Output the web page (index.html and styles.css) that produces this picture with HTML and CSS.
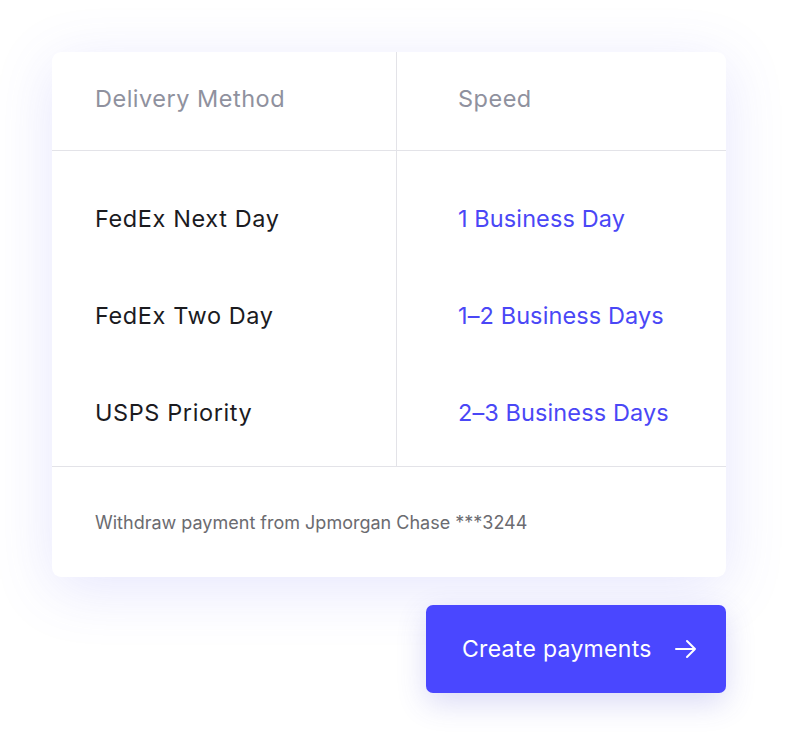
FILE: index.html
```html
<!DOCTYPE html>
<html>
<head>
<meta charset="utf-8">
<link rel="stylesheet" href="styles.css">
</head>
<body>
<div class="wrap">
  <div class="card">
    <div class="grid head">
      <div class="cell left">Delivery Method</div>
      <div class="cell right">Speed</div>
    </div>
    <div class="grid body">
      <div class="col left">
        <div class="row">FedEx Next Day</div>
        <div class="row">FedEx Two Day</div>
        <div class="row">USPS Priority</div>
      </div>
      <div class="col right blue">
        <div class="row">1 Business Day</div>
        <div class="row">1–2 Business Days</div>
        <div class="row">2–3 Business Days</div>
      </div>
    </div>
    <div class="foot">Withdraw payment from Jpmorgan Chase ***3244</div>
  </div>
  <div class="actions">
    <button class="btn">
      <span>Create payments</span>
      <svg width="24" height="24" viewBox="0 0 24 24" fill="none" stroke="#fff" stroke-width="2" stroke-linecap="round" stroke-linejoin="round"><path d="M2 12h19M13 4l8 8-8 8"/></svg>
    </button>
  </div>
</div>
</body>
</html>
```
FILE: styles.css
```css
* { box-sizing: border-box; }
html, body { margin: 0; background: #fff; }
body { font-family: Inter, "Liberation Sans", sans-serif; }
.wrap { padding: 52px 0 40px 52px; width: 726px; }
.card {
  width: 674px;
  background: #fff;
  border-radius: 9px;
  box-shadow: 0 12px 60px rgba(90, 90, 240, 0.15);
  overflow: hidden;
}
.grid { display: grid; grid-template-columns: 344px 330px; }
.head { height: 99px; border-bottom: 1px solid #e3e3e8; }
.cell { display: flex; align-items: center; padding-left: 43px; padding-bottom: 5px; font-size: 23.5px; color: #8f919e; letter-spacing: 0.5px; }
.cell.right { padding-left: 61px; border-left: 1px solid #e3e3e8; }
.body { height: 316px; border-bottom: 1px solid #e3e3e8; }
.col { display: flex; flex-direction: column; padding-top: 19px; }
.col.left { padding-left: 43px; }
.col.right { padding-left: 61px; border-left: 1px solid #e3e3e8; }
.row { height: 97px; flex: none; display: flex; align-items: center; font-size: 23.5px; color: #1b1b1f; letter-spacing: 0.6px; }
.blue .row { color: #4a47f6; letter-spacing: 0.1px; }
.foot { height: 110px; display: flex; align-items: center; padding-left: 43px; font-size: 18px; color: #6b6b70; letter-spacing: 0; }
.actions { display: flex; justify-content: flex-end; margin-top: 28px; }
.btn {
  width: 300px; height: 88px;
  background: #4a47ff; border: 0; border-radius: 7px;
  display: flex; align-items: center; justify-content: space-between;
  padding: 0 28px 0 36px;
  color: #fff; font-family: Inter, "Liberation Sans", sans-serif; font-size: 23px; letter-spacing: 0.3px;
  box-shadow: 0 10px 30px rgba(70, 70, 210, 0.2);
}
```
